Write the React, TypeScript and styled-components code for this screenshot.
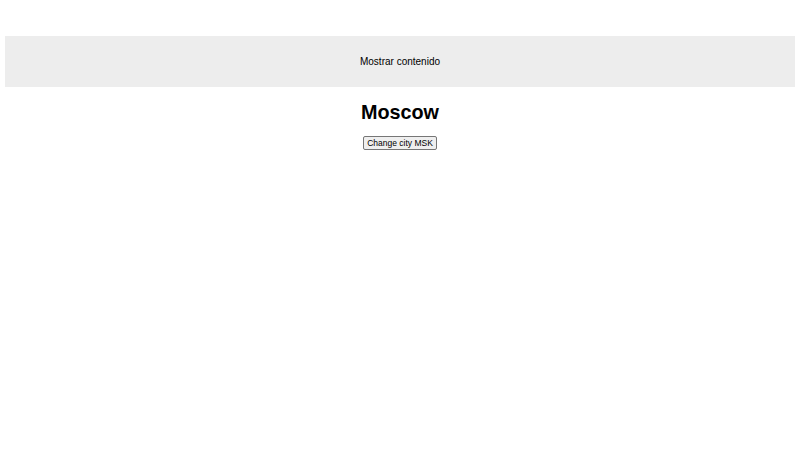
import styled, { createGlobalStyle } from 'styled-components';

const Global = createGlobalStyle`
  html, body {
    margin: 0;
    background: #ffffff;
    font-family: 'Liberation Sans', Arial, sans-serif;
    color: #000;
  }
`;

export default function App() {
  return (
    <>
      <Global />
      <Page_div>
        <Toggle_div>Mostrar contenido</Toggle_div>
        <City_h1>Moscow</City_h1>
        <Change_button type='button'>Change city MSK</Change_button>
      </Page_div>
    </>
  );
}

const Page_div = styled.div`
  display: flex;
  flex-direction: column;
  align-items: center;
  padding: 36px 5px 0;
`;
const Toggle_div = styled.div`
  align-self: stretch;
  height: 51px;
  display: flex;
  align-items: center;
  justify-content: center;
  background: #ededed;
  font-size: 10px;
`;
const City_h1 = styled.h1`
  margin: 14px 0 12px;
  font-size: 19.8px;
  font-weight: bold;
  line-height: 1.15;
`;
const Change_button = styled.button`
  font-family: 'Liberation Sans', Arial, sans-serif;
  font-size: 8.5px;
  line-height: 10px;
  padding: 1px 3px;
  border: 1px solid #767676;
  border-radius: 2px;
  background: #efefef;
  color: #000;
`;
